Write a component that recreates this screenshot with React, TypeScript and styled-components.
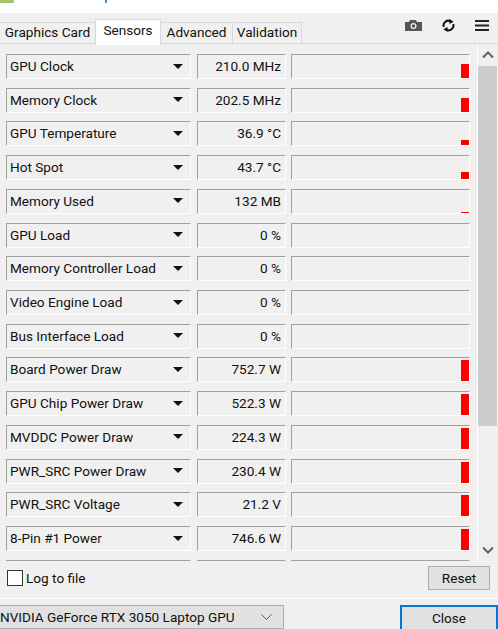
import React from 'react';
import styled, { createGlobalStyle } from 'styled-components';

const sensors = [
  { name: 'GPU Clock', value: '210.0 MHz', level: 14 },
  { name: 'Memory Clock', value: '202.5 MHz', level: 14 },
  { name: 'GPU Temperature', value: '36.9 °C', level: 5 },
  { name: 'Hot Spot', value: '43.7 °C', level: 7 },
  { name: 'Memory Used', value: '132 MB', level: 1 },
  { name: 'GPU Load', value: '0 %', level: 0 },
  { name: 'Memory Controller Load', value: '0 %', level: 0 },
  { name: 'Video Engine Load', value: '0 %', level: 0 },
  { name: 'Bus Interface Load', value: '0 %', level: 0 },
  { name: 'Board Power Draw', value: '752.7 W', level: 21 },
  { name: 'GPU Chip Power Draw', value: '522.3 W', level: 21 },
  { name: 'MVDDC Power Draw', value: '224.3 W', level: 21 },
  { name: 'PWR_SRC Power Draw', value: '230.4 W', level: 21 },
  { name: 'PWR_SRC Voltage', value: '21.2 V', level: 21 },
  { name: '8-Pin #1 Power', value: '746.6 W', level: 21 },
  { name: '', value: '', level: 0 },
];

const tabs = [
  { label: 'Graphics Card', width: 97 },
  { label: 'Sensors', width: 66 },
  { label: 'Advanced', width: 73 },
  { label: 'Validation', width: 70 },
];

const App: React.FC = () => {
  return (
    <Page>
      <GlobalStyle />
      <TitleStrip>
        <TitleLogo />
        <TitleCaret />
      </TitleStrip>
      <TabBar>
        <TabList>
          {tabs.map((tab) => (
            <Tab key={tab.label} width={tab.width} active={tab.label === 'Sensors'}>
              {tab.label}
            </Tab>
          ))}
        </TabList>
        <Tools>
          <svg width="17" height="11" viewBox="0 0 17 11">
            <path
              fill="#555"
              fillRule="evenodd"
              d="M0 2h4l1-2h6l1 2h5v9H0zM8.500 3a3 3 0 1 0 0 6a3 3 0 0 0 0-6zM8.500 4.200a1.800 1.800 0 1 1 0 3.600a1.800 1.800 0 0 1 0-3.600z"
            />
          </svg>
          <svg width="13" height="13" viewBox="0 0 14 14">
            <path
              fill="none"
              stroke="#111"
              strokeWidth="2.200"
              d="M2 8.500A5 5 0 0 1 9.500 2.700M12 5.500A5 5 0 0 1 4.500 11.300"
            />
            <path fill="#111" d="M8 0l4.500 3L8 5.500zM6 8.500L1.500 11L6 14z" />
          </svg>
          <svg width="14" height="11" viewBox="0 0 14 11">
            <path fill="#222" d="M0 0h14v2H0zM0 4.500h14v2H0zM0 9h14v2H0z" />
          </svg>
        </Tools>
      </TabBar>
      <SensorPanel>
        <SensorList>
          {sensors.map((sensor, i) => (
            <SensorRow key={i}>
              <NameField>
                <span>{sensor.name}</span>
                <Arrow />
              </NameField>
              <ValueField>{sensor.value}</ValueField>
              <GraphField>
                {sensor.level > 0 && <GraphBar style={{ height: sensor.level }} />}
              </GraphField>
            </SensorRow>
          ))}
        </SensorList>
        <ScrollBar>
          <ScrollButton>
            <svg width="12" height="8" viewBox="0 0 12 8">
              <path d="M1 6.500l5-5l5 5" fill="none" stroke="#606060" strokeWidth="2" />
            </svg>
          </ScrollButton>
          <ScrollTrack>
            <ScrollThumb />
          </ScrollTrack>
          <ScrollButton>
            <svg width="12" height="8" viewBox="0 0 12 8">
              <path d="M1 1.500l5 5l5-5" fill="none" stroke="#606060" strokeWidth="2" />
            </svg>
          </ScrollButton>
        </ScrollBar>
      </SensorPanel>
      <LogRow>
        <LogLabel>
          <CheckBox />
          Log to file
        </LogLabel>
        <ResetButton>Reset</ResetButton>
      </LogRow>
      <Footer>
        <GpuSelect>
          <span>NVIDIA GeForce RTX 3050 Laptop GPU</span>
          <svg width="11" height="6" viewBox="0 0 11 6">
            <path d="M0.500 0.500l5 5l5-5" fill="none" stroke="#555" strokeWidth="1" />
          </svg>
        </GpuSelect>
        <CloseButton>Close</CloseButton>
      </Footer>
    </Page>
  );
};

export default App;

const GlobalStyle = createGlobalStyle`
  html, body {
    margin: 0;
    padding: 0;
    background: #f0f0f0;
  }
  * {
    box-sizing: border-box;
  }
`;

const Page = styled.div`
  width: 498px;
  height: 629px;
  overflow: hidden;
  background: #f0f0f0;
  color: #111;
  font-family: Roboto, 'Liberation Sans', sans-serif;
  font-size: 13.600px;
`;

const TitleStrip = styled.div`
  height: 13px;
  background: #fff;
  position: relative;
`;

const TitleLogo = styled.div`
  width: 14px;
  height: 3px;
  background: #a9c46c;
`;

const TitleCaret = styled.div`
  position: absolute;
  left: 105px;
  top: 0;
  width: 2px;
  height: 3px;
  background: #3b8ed0;
`;

const TabBar = styled.div`
  height: 31px;
  display: flex;
  justify-content: space-between;
  border-bottom: 1px solid #d9d9d9;
`;

const TabList = styled.div`
  display: flex;
  align-items: flex-end;
  padding-top: 6px;
`;

const Tab = styled.div<{ active?: boolean; width: number }>`
  width: ${({ width }) => width}px;
  height: ${({ active }) => (active ? '26px' : '22px')};
  margin-bottom: ${({ active }) => (active ? '-2px' : '-1px')};
  padding-top: ${({ active }) => (active ? '2px' : '1px')};
  text-align: center;
  background: ${({ active }) => (active ? '#fff' : '#f0f0f0')};
  border: 1px solid #d9d9d9;
  border-bottom: ${({ active }) => (active ? 'none' : '1px solid #d9d9d9')};
  margin-left: -1px;
  position: relative;
  white-space: nowrap;
`;

const Tools = styled.div`
  display: flex;
  align-items: center;
  gap: 20px;
  padding: 0 9px 5px 0;
`;

const SensorPanel = styled.div`
  display: flex;
  height: 517px;
  padding-left: 6px;
`;

const SensorList = styled.div`
  width: 464px;
  height: 517px;
  padding-top: 10px;
  overflow: hidden;
  display: flex;
  flex-direction: column;
  gap: 8.730px;
`;

const SensorRow = styled.div`
  display: flex;
  flex: none;
  height: 25px;
`;

const Sunken = styled.div`
  height: 25px;
  border-top: 1px solid #a0a0a0;
  border-left: 1px solid #a0a0a0;
  border-right: 1px solid #fff;
  border-bottom: 1px solid #fff;
  display: flex;
  align-items: center;
`;

const NameField = styled(Sunken)`
  width: 185px;
  padding: 0 7px 1px 3px;
  justify-content: space-between;
  white-space: nowrap;
`;

const Arrow = styled.div`
  width: 0;
  height: 0;
  border-left: 5px solid transparent;
  border-right: 5px solid transparent;
  border-top: 5px solid #111;
`;

const ValueField = styled(Sunken)`
  width: 89px;
  margin-left: 6px;
  padding: 0 4px 1px 0;
  justify-content: flex-end;
`;

const GraphField = styled(Sunken)`
  width: 179px;
  margin-left: 5px;
  justify-content: flex-end;
  align-items: flex-end;
`;

const GraphBar = styled.div`
  width: 8px;
  background: #f00;
`;

const ScrollBar = styled.div`
  width: 20px;
  margin-left: 7px;
  display: flex;
  flex-direction: column;
  background: #f0f0f0;
  border-left: 1px solid #fff;
`;

const ScrollButton = styled.div`
  height: 22px;
  flex: none;
  display: flex;
  align-items: center;
  justify-content: center;
`;

const ScrollTrack = styled.div`
  flex: 1;
`;

const ScrollThumb = styled.div`
  height: 360px;
  background: #cdcdcd;
`;

const LogRow = styled.div`
  height: 38px;
  padding: 5px 8px 0 7px;
  display: flex;
  justify-content: space-between;
  align-items: flex-start;
  border-bottom: 1px solid #fff;
`;

const LogLabel = styled.label`
  display: flex;
  align-items: center;
  gap: 3px;
  height: 24px;
`;

const CheckBox = styled.div`
  width: 16px;
  height: 16px;
  background: #fff;
  border: 1px solid #333;
`;

const ResetButton = styled.div`
  width: 62px;
  height: 24px;
  background: #e1e1e1;
  border: 1px solid #adadad;
  display: flex;
  align-items: center;
  justify-content: center;
`;

const Footer = styled.div`
  padding-top: 6px;
  display: flex;
  justify-content: space-between;
`;

const GpuSelect = styled.div`
  width: 284px;
  height: 24px;
  background: #e1e1e1;
  border: 1px solid #adadad;
  border-left: none;
  padding: 0 11px 0 0;
  display: flex;
  align-items: center;
  justify-content: space-between;
  white-space: nowrap;
`;

const CloseButton = styled.div`
  width: 98px;
  height: 24px;
  background: #e1e1e1;
  border: 2px solid #0078d7;
  border-bottom: none;
  display: flex;
  align-items: center;
  justify-content: center;
`;
